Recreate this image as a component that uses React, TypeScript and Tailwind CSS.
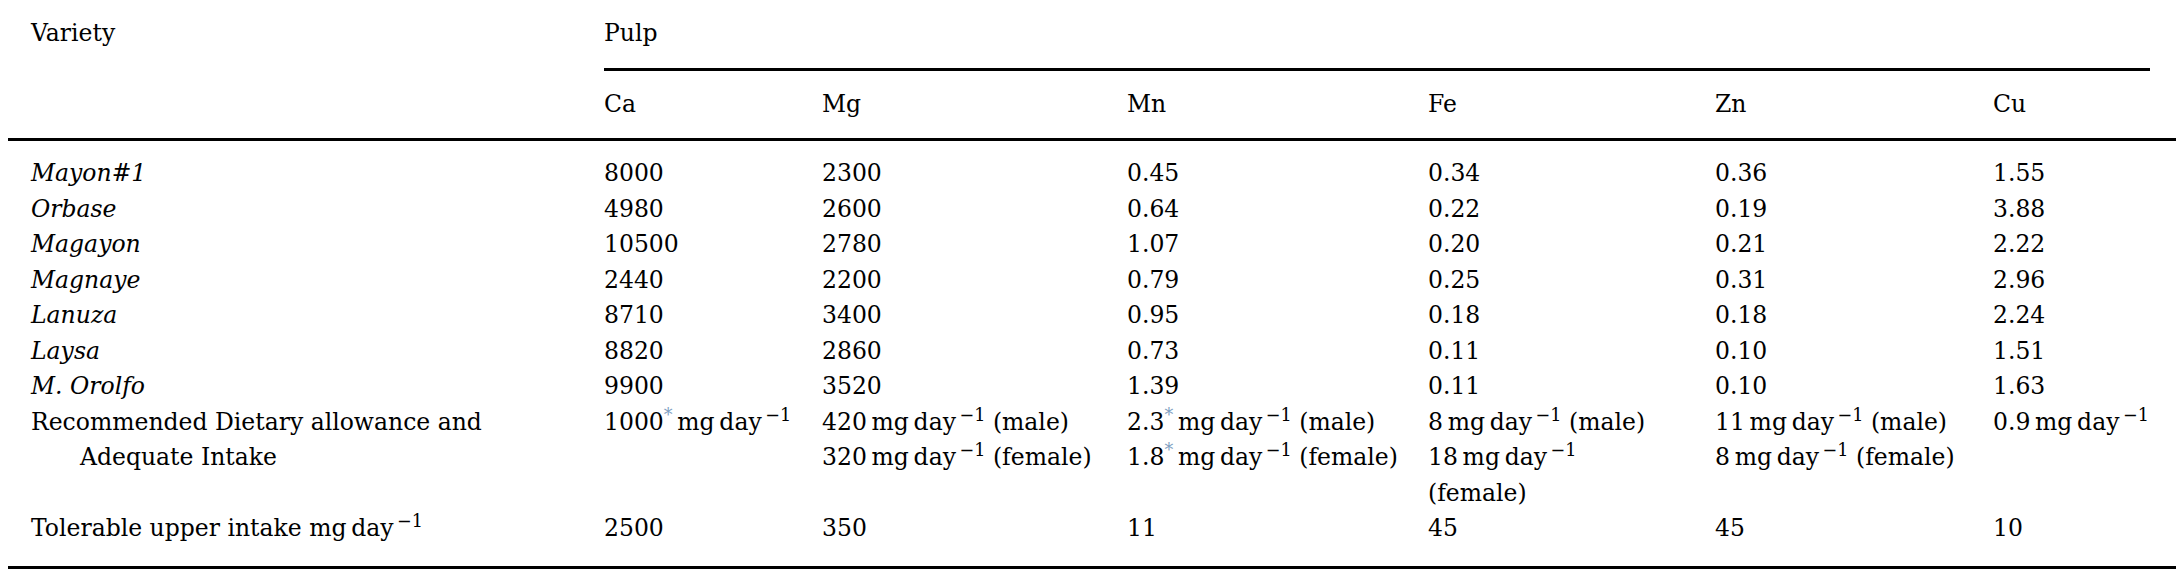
import React from "react";

const COLS = "grid grid-cols-[596px_218px_305px_301px_287px_278px_1fr]";

type Row = { name: string; values: string[] };

const rows: Row[] = [
  { name: "Mayon#1", values: ["8000", "2300", "0.45", "0.34", "0.36", "1.55"] },
  { name: "Orbase", values: ["4980", "2600", "0.64", "0.22", "0.19", "3.88"] },
  { name: "Magayon", values: ["10500", "2780", "1.07", "0.20", "0.21", "2.22"] },
  { name: "Magnaye", values: ["2440", "2200", "0.79", "0.25", "0.31", "2.96"] },
  { name: "Lanuza", values: ["8710", "3400", "0.95", "0.18", "0.18", "2.24"] },
  { name: "Laysa", values: ["8820", "2860", "0.73", "0.11", "0.10", "1.51"] },
  { name: "M. Orolfo", values: ["9900", "3520", "1.39", "0.11", "0.10", "1.63"] },
];

function Star() {
  return <sup className="text-[#7f9fc2]">*</sup>;
}

// "mg day^-1" unit
function Unit() {
  return (
    <>
      mg{"\u2009"}day<sup>{"\u2009"}−1</sup>
    </>
  );
}

export default function App() {
  return (
    <div
      className="min-h-[575px] bg-white pl-[8px] text-[23.5px] leading-[35.5px] text-black"
      style={{ fontFamily: '"DejaVu Serif", "Liberation Serif", serif' }}
    >
      {/* header */}
      <div className="border-b-[3px] border-black">
        <div className={COLS}>
          <div className="pl-[23px] pt-[16px]">Variety</div>
          <div className="col-[2/8] mr-[26px] border-b-[3px] border-black pb-[16px] pt-[16px]">Pulp</div>
        </div>
        <div className={`${COLS} pb-[16px] pt-[16px]`}>
          <div />
          <div>Ca</div>
          <div>Mg</div>
          <div>Mn</div>
          <div>Fe</div>
          <div>Zn</div>
          <div>Cu</div>
        </div>
      </div>

      {/* body */}
      <div className="border-b-[3px] border-black pb-[19px] pt-[15px]">
        {rows.map((r) => (
          <div key={r.name} className={COLS}>
            <div className="pl-[23px] italic">{r.name}</div>
            {r.values.map((v, i) => (
              <div key={i}>{v}</div>
            ))}
          </div>
        ))}

        <div className={`${COLS} whitespace-nowrap`}>
          <div className="pl-[23px]">
            <div>Recommended Dietary allowance and</div>
            <div className="pl-[49px]">Adequate Intake</div>
          </div>
          <div>
            1000
            <Star />
            {"\u2009"}
            <Unit />
          </div>
          <div>
            <div>
              420{"\u2009"}
              <Unit /> (male)
            </div>
            <div>
              320{"\u2009"}
              <Unit /> (female)
            </div>
          </div>
          <div>
            <div>
              2.3
              <Star />
              {"\u2009"}
              <Unit /> (male)
            </div>
            <div>
              1.8
              <Star />
              {"\u2009"}
              <Unit /> (female)
            </div>
          </div>
          <div>
            <div>
              8{"\u2009"}
              <Unit /> (male)
            </div>
            <div>
              18{"\u2009"}
              <Unit />
            </div>
            <div>(female)</div>
          </div>
          <div>
            <div>
              11{"\u2009"}
              <Unit /> (male)
            </div>
            <div>
              8{"\u2009"}
              <Unit /> (female)
            </div>
          </div>
          <div>
            0.9{"\u2009"}
            <Unit />
          </div>
        </div>

        <div className={COLS}>
          <div className="pl-[23px]">
            Tolerable upper intake <Unit />
          </div>
          <div>2500</div>
          <div>350</div>
          <div>11</div>
          <div>45</div>
          <div>45</div>
          <div>10</div>
        </div>
      </div>
    </div>
  );
}
